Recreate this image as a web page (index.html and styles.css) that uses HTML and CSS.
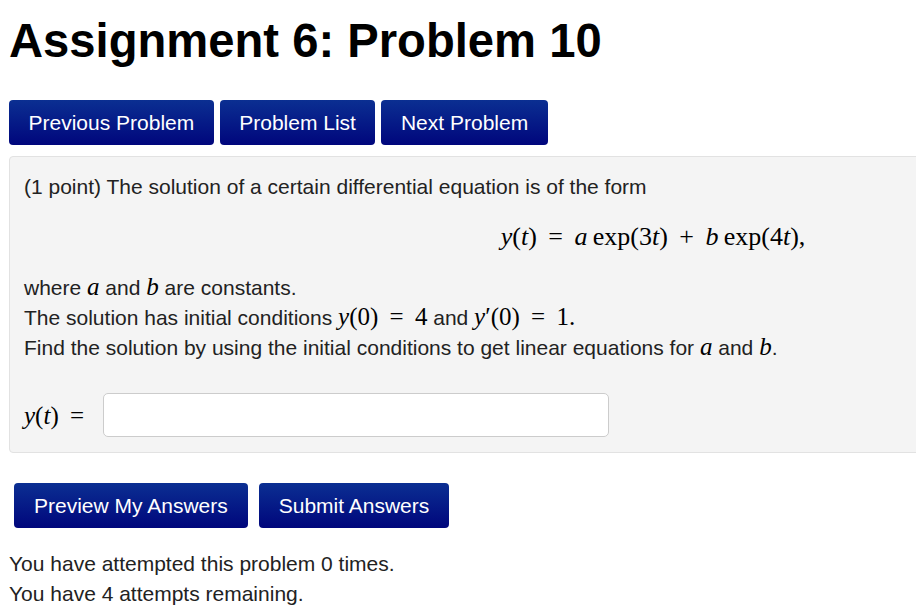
FILE: index.html
```html
<!DOCTYPE html>
<html>
	<head>
		<meta charset="UTF-8">
		<title>Assignment 6: Problem 10</title>
		<link rel="stylesheet" href="styles.css">
	</head>
	<body>
		<div class="page">
			<h1 class="title">Assignment 6: Problem 10</h1>
			<div class="nav">
				<span class="btn">Previous Problem</span>
				<span class="btn">Problem List</span>
				<span class="btn">Next Problem</span>
			</div>
			<div class="problem">
				<p class="line">(1 point) The solution of a certain differential equation is of the form</p>
				<div class="display">
					<span class="m"><i>y</i>(<i>t</i>) <span class="op">=</span> <i>a</i>&#8201;exp(3<i>t</i>) <span class="op">+</span> <i>b</i>&#8201;exp(4<i>t</i>),</span>
				</div>
				<p class="line">where <i class="m">a</i> and <i class="m">b</i> are constants.</p>
				<p class="line">The solution has initial conditions <span class="m"><i>y</i>(0) <span class="op">=</span> 4</span> and <span class="m"><i>y</i>&#8242;(0) <span class="op">=</span> 1.</span></p>
				<p class="line">Find the solution by using the initial conditions to get linear equations for <i class="m">a</i> and <i class="m">b</i>.</p>
				<div class="answer">
					<span class="m lbl"><i>y</i>(<i>t</i>) <span class="op">=</span></span>
					<input type="text" class="ans" value="">
				</div>
			</div>
			<div class="submit">
				<span class="btn">Preview My Answers</span>
				<span class="btn">Submit Answers</span>
			</div>
			<p class="note">You have attempted this problem 0 times.</p>
			<p class="note">You have 4 attempts remaining.</p>
		</div>
	</body>
</html>
```

FILE: styles.css
```css
*{
	box-sizing: border-box;
	margin: 0;
	padding: 0;
}
body{
	font-family: "Liberation Sans", Arial, sans-serif;
	font-size: 21px;
	color: #222;
	background: #fff;
	overflow: hidden;
}
.page{
	padding: 0 9px;
	width: 1320px;
}
.title{
	font-size: 47.2px;
	font-weight: bold;
	color: #000;
	line-height: 56px;
	padding-top: 13px;
}
.nav{
	display: flex;
	gap: 6px;
	margin-top: 31px;
}
.btn{
	display: inline-block;
	height: 45px;
	line-height: 45px;
	padding: 0 19.5px;
	border-radius: 4px;
	background: linear-gradient(#0b2f92, #00067c);
	color: #fff;
	font-size: 21px;
}
.submit .btn{
	padding: 0 20px;
}
.problem{
	margin-top: 11px;
	width: 1288px;
	background: #f4f4f4;
	border: 1px solid #e2e2e2;
	border-radius: 4px;
	padding: 15px 14px 15px;
}
.line{
	line-height: 30px;
}
.m{
	font-family: "Liberation Serif", "Times New Roman", serif;
	font-size: 25px;
	line-height: 1;
	color: #000;
}
.m i{
	font-style: italic;
}
i.m{
	font-style: italic;
}
.op{
	margin: 0 5px;
}
.display{
	text-align: center;
	padding: 21px 0 20px;
	line-height: 30px;
}
.display .m{
	font-size: 26px;
}
.answer{
	display: flex;
	align-items: center;
	gap: 14px;
	margin-top: 30px;
}
.ans{
	width: 506px;
	height: 44px;
	border: 1px solid #ccc;
	border-radius: 5px;
	background: #fff;
}
.submit{
	display: flex;
	gap: 11px;
	margin: 30px 0 0 5px;
}
.note{
	line-height: 30px;
}
.submit + .note{
	margin-top: 21px;
}
```
